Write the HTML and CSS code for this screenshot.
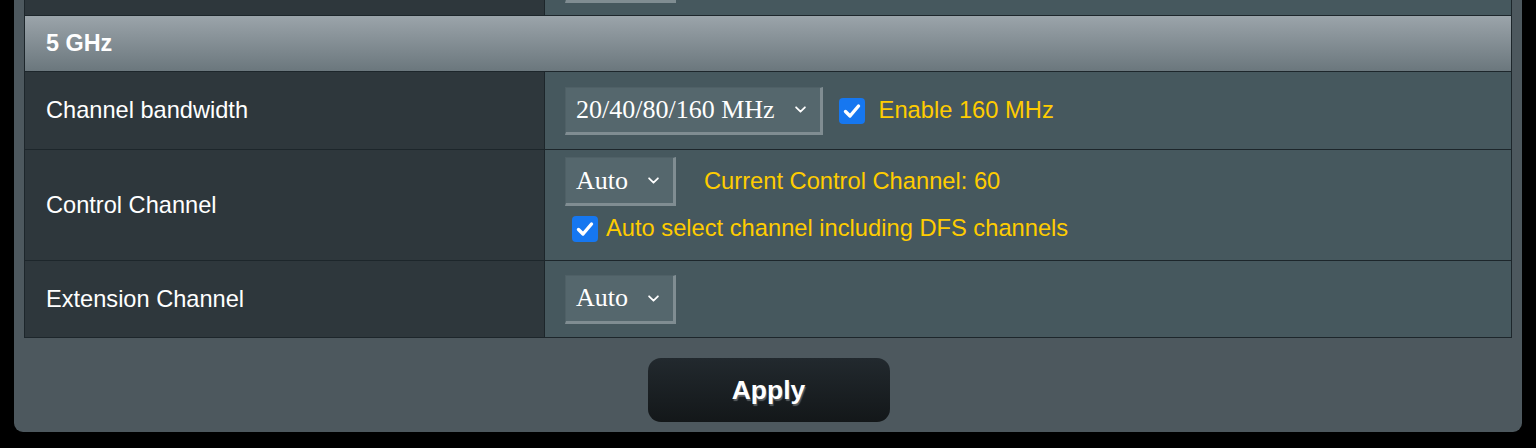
FILE: index.html
```html
<!DOCTYPE html>
<html lang="en">
<head>
<meta charset="utf-8">
<title>5 GHz settings</title>
<link rel="stylesheet" href="styles.css">
</head>
<body>
<div class="panel">
  <div class="table">
    <div class="row row-top">
      <div class="label"></div>
      <div class="value"><div class="select blank"><svg class="chev" viewBox="0 0 10 6"><path d="M1 1l4 4 4-4"/></svg></div></div>
    </div>
    <div class="head">5 GHz</div>
    <div class="row row-1">
      <div class="label">Channel bandwidth</div>
      <div class="value">
        <div class="line">
          <div class="select wide"><span>20/40/80/160 MHz</span><svg class="chev" viewBox="0 0 10 6"><path d="M1 1l4 4 4-4"/></svg></div>
          <span class="check"><svg viewBox="0 0 26 26"><path d="M6.5 13.5l4.5 4.5 8.5-10"/></svg></span>
          <span class="note note-enable">Enable 160 MHz</span>
        </div>
      </div>
    </div>
    <div class="row row-2">
      <div class="label">Control Channel</div>
      <div class="value stack">
        <div class="line">
          <div class="select"><span>Auto</span><svg class="chev" viewBox="0 0 10 6"><path d="M1 1l4 4 4-4"/></svg></div>
          <span class="note note-current">Current Control Channel: 60</span>
        </div>
        <div class="line line-dfs">
          <span class="check"><svg viewBox="0 0 26 26"><path d="M6.5 13.5l4.5 4.5 8.5-10"/></svg></span>
          <span class="note note-dfs">Auto select channel including DFS channels</span>
        </div>
      </div>
    </div>
    <div class="row row-3">
      <div class="label">Extension Channel</div>
      <div class="value">
        <div class="select"><span>Auto</span><svg class="chev" viewBox="0 0 10 6"><path d="M1 1l4 4 4-4"/></svg></div>
      </div>
    </div>
  </div>
  <div class="actions">
    <button class="apply" type="button">Apply</button>
  </div>
</div>
</body>
</html>
```
FILE: styles.css
```css
html, body {
  margin: 0;
  background: #000;
  overflow: hidden;
}
body {
  font-family: "Liberation Sans", Arial, sans-serif;
  color: #fff;
}
.panel {
  margin: -64px 14px 0;
  background: #4d585e;
  border-radius: 0 0 9px 9px;
  padding: 0 10px 10px;
}
.table {
  border: 1px solid #1d262b;
  border-bottom: 0;
}
.row {
  display: grid;
  grid-template-columns: 520px 1fr;
  border-bottom: 1px solid #1d262b;
}
.label {
  background: #2e373c;
  border-right: 1px solid #1d262b;
  display: flex;
  align-items: center;
  padding-left: 21px;
  font-size: 23.6px;
  color: #fff;
}
.value {
  background: #46585e;
  padding: 0 20px;
  display: flex;
  align-items: center;
}
.row-top { height: 78px; }
.row-top .value { align-items: flex-start; padding-top: 17px; }
.row-1 { height: 77px; }
.row-2 { height: 110px; }
.row-3 { height: 76px; }
.stack {
  flex-direction: column;
  align-items: flex-start;
  justify-content: flex-start;
  padding-top: 7px;
  gap: 9px;
}
.line {
  display: flex;
  align-items: center;
}
.line-dfs { padding-left: 7px; }
.head {
  height: 55px;
  border-bottom: 1px solid #1d262b;
  background: linear-gradient(#9ba4aa, #6b777d);
  font-weight: bold;
  font-size: 23.4px;
  display: flex;
  align-items: center;
  padding-left: 21px;
}
.select {
  box-sizing: border-box;
  height: 49px;
  display: flex;
  align-items: center;
  padding: 0 14px 0 10px;
  background: #55676d;
  border-style: solid;
  border-width: 1px 3px 3px 1px;
  border-color: #4f6066 #808d92 #808d92 #4f6066;
  font-family: "Liberation Serif", "Times New Roman", serif;
  font-size: 26px;
  color: #fff;
  gap: 20px;
}
.select.blank { width: 111px; justify-content: flex-end; }
.select.wide { height: 48px; gap: 20px; }
.chev {
  width: 11px;
  height: 7px;
  fill: none;
  stroke: #fff;
  stroke-width: 1.6;
  stroke-linecap: round;
  stroke-linejoin: round;
}
.check {
  width: 26px;
  height: 26px;
  border-radius: 4px;
  background: #1677f0;
  display: inline-flex;
}
.check svg {
  width: 26px;
  height: 26px;
  fill: none;
  stroke: #fff;
  stroke-width: 3.4;
  stroke-linecap: round;
  stroke-linejoin: round;
}
.row-1 .check { margin-left: 16px; }
.note {
  color: #ffcc00;
  font-size: 23.7px;
}
.note-enable { margin-left: 14px; }
.note-current { margin-left: 28px; }
.note-dfs { margin-left: 8px; }
.actions {
  display: flex;
  justify-content: center;
  padding-top: 20px;
  padding-left: 1px;
}
.apply {
  width: 242px;
  height: 64px;
  border: 0;
  border-radius: 13px;
  background: linear-gradient(#22292e, #131719);
  color: #fff;
  font-family: "Liberation Sans", Arial, sans-serif;
  font-weight: bold;
  font-size: 26.5px;
  text-shadow: 1px 2px 1px #5a5f62;
  padding: 0;
}
```
